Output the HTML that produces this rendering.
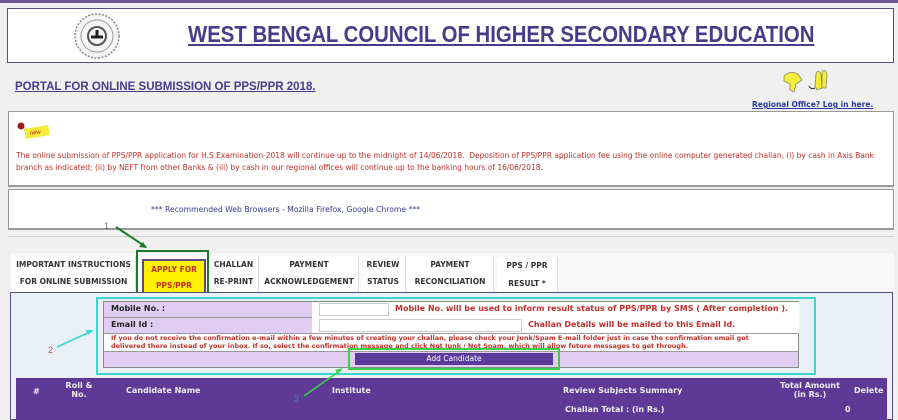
<!DOCTYPE html>
<html><head><meta charset="utf-8"><style>
*{margin:0;padding:0;box-sizing:border-box}
body{width:898px;height:420px;overflow:hidden;background:#f0f0f0;font-family:"DejaVu Sans","Liberation Sans",sans-serif;position:relative}
.a{position:absolute;white-space:nowrap}
.tab{position:absolute;top:256px;height:36px;font-size:7.5px;font-weight:bold;color:#333;text-align:center;line-height:17px;background:#fff;border-right:1px solid #ddd}
.th{position:absolute;color:#eee;font-size:8px;font-weight:bold;text-align:center;line-height:9px}
.red{color:#c0302a;font-weight:bold}
</style></head><body>
<div class="a" style="left:0;top:0;width:898px;height:3px;background:#6a5a9a"></div>
<div class="a" style="left:7px;top:8px;width:887px;height:55px;background:#fff;border:1.5px solid #5a4a8a"></div>
<svg class="a" style="left:73px;top:12px" width="48" height="48"><circle cx="24" cy="24" r="22" fill="#f4f4f4" stroke="#888" stroke-width="1.5" stroke-dasharray="2 1.5"/><circle cx="24" cy="24" r="16" fill="none" stroke="#999"/><circle cx="24" cy="24" r="9" fill="none" stroke="#555" stroke-width="2"/><path d="M18 25 h12 M24 18 v7" stroke="#222" stroke-width="3"/></svg>
<div class="a" style="left:188px;top:21px;font-family:'Liberation Sans',sans-serif;font-size:23.5px;font-weight:bold;color:#4a3a8a;text-decoration:underline;transform:scaleX(0.866);transform-origin:0 0">WEST BENGAL COUNCIL OF HIGHER SECONDARY EDUCATION</div>
<div class="a" style="left:15px;top:81px;font-size:11.5px;font-weight:bold;color:#4a3a8a;text-decoration:underline;font-family:'Liberation Sans',sans-serif">PORTAL FOR ONLINE SUBMISSION OF PPS/PPR 2018.</div>
<svg class="a" style="left:780px;top:68px" width="50" height="28"><path d="M4 8 q6-6 14-2 l4 6 -6 4 -2 8 -4-2 0-6 -6-3z" fill="#f4ec3a" stroke="#886" stroke-width=".8"/><path d="M36 6 q2-6 5 0 l1 14 -5 2 -2-4z M42 4 q3-4 5 2 l-1 14 -4 0z" fill="#f4ec3a" stroke="#886" stroke-width=".8"/><path d="M29 18 q2 4 6 2" fill="none" stroke="#333"/></svg>
<div class="a" style="left:752px;top:100px;font-size:7.5px;color:#2a3aa0;text-decoration:underline;font-weight:bold">Regional Office? Log in here.</div>
<div class="a" style="left:8px;top:111px;width:886px;height:76px;background:#fff;border:1px solid #999;border-bottom:2px solid #999"></div>
<svg class="a" style="left:16px;top:121px" width="36" height="20"><path d="M8 8 l24-4 2 10 -24 4z" fill="#f6ea3a"/><circle cx="5" cy="5" r="3.5" fill="#a01818"/><text x="14" y="14" font-size="6" fill="#c02020" font-family="Liberation Sans" transform="rotate(-8 14 14)">new</text></svg>
<div class="a red" style="left:16px;top:150px;font-size:7.5px;line-height:12px;font-weight:normal;color:#c0302a">The online submission of PPS/PPR application for H.S Examination-2018 will continue up to the midnight of 14/06/2018.&nbsp; Deposition of PPS/PPR application fee using the online computer generated challan, (i) by cash in Axis Bank<br>branch as indicated; (ii) by NEFT from other Banks &amp; (iii) by cash in our regional offices will continue up to the banking hours of 16/06/2018.</div>
<div class="a" style="left:8px;top:189px;width:886px;height:41px;background:#fff;border:1px solid #999;border-bottom:2px solid #999"></div>
<div class="a" style="left:151px;top:205px;font-size:7.7px;color:#3a3a8a">*** Recommended Web Browsers - Mozilla Firefox, Google Chrome ***</div>
<div class="a" style="left:8px;top:236px;width:886px;height:1px;background:#ccc"></div>
<div class="a" style="left:10px;top:253px;width:884px;height:40px;background:#f8f8f8"></div>
<div class="tab" style="left:12px;width:124px">IMPORTANT INSTRUCTIONS<br>FOR ONLINE SUBMISSION</div>
<div class="tab" style="left:142px;top:259px;width:64px;background:#fff200;color:#c03020;border:2px solid #5a4a8a;line-height:16px;padding-top:1px">APPLY FOR<br>PPS/PPR</div>
<div class="a" style="left:136px;top:250px;width:73px;height:46px;border:2px solid #1f7a2a"></div>
<div class="tab" style="left:209px;width:50px">CHALLAN<br>RE-PRINT</div>
<div class="tab" style="left:260px;width:99px">PAYMENT<br>ACKNOWLEDGEMENT</div>
<div class="tab" style="left:361px;width:45px">REVIEW<br>STATUS</div>
<div class="tab" style="left:407px;width:87px">PAYMENT<br>RECONCILIATION</div>
<div class="tab" style="left:497px;width:61px;line-height:18px;top:257px">PPS / PPR<br>RESULT *</div>
<div class="a" style="left:10px;top:292px;width:883px;height:128px;background:#eaf0f8;border:1.5px solid #5a4a8a"></div>
<div class="a" style="left:103px;top:301px;width:696px;height:67px;background:#e2cdf2;border:1px solid #888"></div>
<div class="a" style="left:103px;top:317px;width:696px;height:1px;background:#999"></div>
<div class="a" style="left:103px;top:333px;width:696px;height:1px;background:#999"></div>
<div class="a" style="left:103px;top:351px;width:696px;height:1px;background:#999"></div>
<div class="a" style="left:312px;top:302px;width:487px;height:31px;background:#fff"></div>
<div class="a" style="left:104px;top:334px;width:694px;height:17px;background:#fff"></div>
<div class="a" style="left:319px;top:303px;width:70px;height:13px;border:1px solid #ccc;background:#fff"></div>
<div class="a" style="left:319px;top:319px;width:203px;height:13px;border:1px solid #ccc;background:#fff"></div>
<div class="a" style="left:111px;top:304px;font-size:8px;font-weight:bold;color:#222">Mobile No. :</div>
<div class="a" style="left:111px;top:320px;font-size:8px;font-weight:bold;color:#222">Email Id :</div>
<div class="a red" style="left:395px;top:304px;font-size:8px">Mobile No. will be used to inform result status of PPS/PPR by SMS ( After completion ).</div>
<div class="a red" style="left:528px;top:320px;font-size:8px">Challan Details will be mailed to this Email Id.</div>
<div class="a red" style="left:111px;top:334px;font-size:6.5px;line-height:8px">If you do not receive the confirmation e-mail within a few minutes of creating your challan, please check your Junk/Spam E-mail folder just in case the confirmation email got<br>delivered there instead of your inbox. If so, select the confirmation message and click Not Junk / Not Spam, which will allow future messages to get through.</div>
<div class="a" style="left:355px;top:353px;width:198px;height:12px;background:#5a3a9a;color:#fff;font-size:7.5px;text-align:center;line-height:12px">Add Candidate</div>
<div class="a" style="left:348px;top:348px;width:212px;height:22px;border:2px solid #3cd04a"></div>
<div class="a" style="left:96px;top:297px;width:720px;height:78px;border:2px solid #3ad6d6"></div>
<div class="a" style="left:16px;top:378px;width:871px;height:42px;background:#5e3a96"></div>
<div class="th" style="left:33px;top:387px">#</div>
<div class="th" style="left:64px;top:381px;width:30px">Roll &amp;<br>No.</div>
<div class="th" style="left:126px;top:386px">Candidate Name</div>
<div class="th" style="left:332px;top:386px">Institute</div>
<div class="th" style="left:563px;top:386px">Review Subjects Summary</div>
<div class="th" style="left:778px;top:381px;width:64px">Total Amount<br>(in Rs.)</div>
<div class="th" style="left:854px;top:386px">Delete</div>
<div class="th" style="left:565px;top:405px">Challan Total : (in Rs.)</div>
<div class="th" style="left:845px;top:405px">0</div>
<svg class="a" style="left:0;top:0" width="898" height="420">
<text x="104" y="229" font-size="9" fill="#666" font-family="Liberation Sans">1</text>
<path d="M116 227 L146 247" stroke="#1f7a2a" stroke-width="2"/><path d="M147 248 l-8-1 4-5z" fill="#1f7a2a"/>
<text x="48" y="353" font-size="9" fill="#d04040" font-family="Liberation Sans">2</text>
<path d="M57 347 L92 331" stroke="#3ad6d6" stroke-width="1.6"/><path d="M94 330 l-8 0 2 5z" fill="#3ad6d6"/>
<text x="294" y="402" font-size="9" fill="#5a8aa0" font-family="Liberation Sans">3</text>
<path d="M304 396 L341 370" stroke="#3cd04a" stroke-width="1.6"/><path d="M343 368 l-8 2 3 4z" fill="#3cd04a"/>
</svg>
</body></html>
